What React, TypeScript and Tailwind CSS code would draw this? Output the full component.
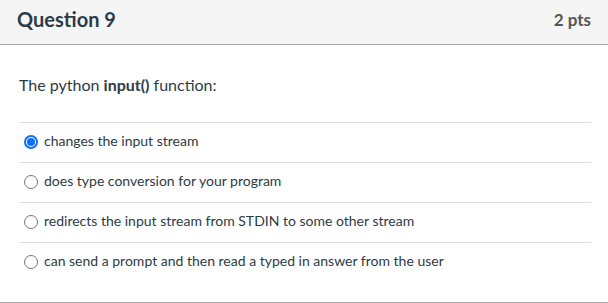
import React from 'react';

const ANSWERS = [
  { id: 'a1', text: 'changes the input stream', checked: true },
  { id: 'a2', text: 'does type conversion for your program', checked: false },
  { id: 'a3', text: 'redirects the input stream from STDIN to some other stream', checked: false },
  { id: 'a4', text: 'can send a prompt and then read a typed in answer from the user', checked: false },
];

function Radio({ checked }: { checked: boolean }) {
  if (checked) {
    return (
      <span className="w-[14px] h-[14px] rounded-full border-2 border-[#0b6efd] flex items-center justify-center shrink-0">
        <span className="w-[8px] h-[8px] rounded-full bg-[#0b6efd]" />
      </span>
    );
  }
  return <span className="w-[14px] h-[14px] rounded-full border border-[#767676] shrink-0" />;
}

export default function App() {
  return (
    <div className="w-[608px] h-[303px] bg-white text-[#2d3b45] font-['Lato','Liberation_Sans',sans-serif]">
      {/* Header */}
      <div className="h-[45px] bg-[#f5f5f5] border-b border-[#a5a5a5] flex items-center justify-between pl-[17px] pr-[17px]">
        <h2 className="text-[20px] font-bold leading-none -mt-[6px]">Question 9</h2>
        <span className="text-[17px] font-bold leading-none text-[#555555] -mt-[5px]">2 pts</span>
      </div>

      {/* Body */}
      <div className="h-[258px] border-b border-[#a5a5a5] px-[19px] pr-[17px]">
        <p className="text-[16px] pt-[30px] leading-[20px]">
          The python <strong className="font-bold">input()</strong> function:
        </p>
        <div className="mt-[27px]">
          {ANSWERS.map((a) => (
            <label
              key={a.id}
              className="flex items-center gap-[6px] h-[40px] border-t border-[#dcdfe1] pl-[5px] text-[14px] leading-none"
            >
              <span className="-mt-[1px] flex"><Radio checked={a.checked} /></span>
              <span className="-mt-[3px]">{a.text}</span>
            </label>
          ))}
        </div>
      </div>
    </div>
  );
}
